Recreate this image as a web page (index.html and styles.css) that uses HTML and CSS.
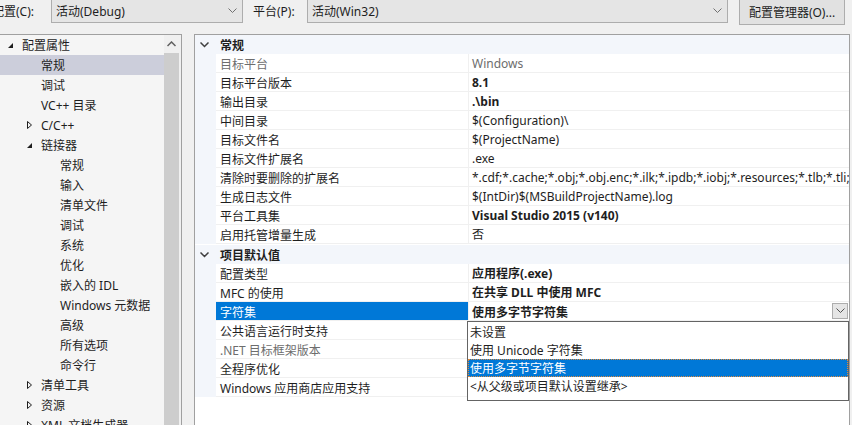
FILE: index.html
```html
<!DOCTYPE html>
<html lang="zh-CN">
<head>
    <meta charset="UTF-8">
    <title>属性页</title>
    <link rel="stylesheet" href="styles.css">
</head>
<body>
    <div class="toolbar">
        <span class="lbl lbl-config">配置(C):</span>
        <div class="combo combo-config">
            <span>活动(Debug)</span>
            <svg class="chev" width="9" height="6" viewBox="0 0 9 6"><path d="M0.5 0.5 L4.5 4.5 L8.5 0.5" fill="none" stroke="#707070" stroke-width="1"/></svg>
        </div>
        <span class="lbl lbl-platform">平台(P):</span>
        <div class="combo combo-platform">
            <span>活动(Win32)</span>
            <svg class="chev" width="9" height="6" viewBox="0 0 9 6"><path d="M0.5 0.5 L4.5 4.5 L8.5 0.5" fill="none" stroke="#707070" stroke-width="1"/></svg>
        </div>
        <button class="btn">配置管理器(O)...</button>
    </div>

    <div class="main">
        <div class="tree-panel">
            <ul class="tree">
                <li class="lv0 has-toggle"><svg class="tog" width="14" height="8" viewBox="0 0 14 8"><path d="M0 7 L5 7 L5 2 Z" fill="#1e1e1e"/></svg>配置属性</li>
                <li class="lv1 selected">常规</li>
                <li class="lv1">调试</li>
                <li class="lv1">VC++ 目录</li>
                <li class="lv1t has-toggle"><svg class="tog" width="14" height="8" viewBox="0 0 14 8"><path d="M0.5 0.5 L4.5 4 L0.5 7.5 Z" fill="none" stroke="#1e1e1e" stroke-width="1"/></svg>C/C++</li>
                <li class="lv1t has-toggle"><svg class="tog" width="14" height="8" viewBox="0 0 14 8"><path d="M0 7 L5 7 L5 2 Z" fill="#1e1e1e"/></svg>链接器</li>
                <li class="lv2">常规</li>
                <li class="lv2">输入</li>
                <li class="lv2">清单文件</li>
                <li class="lv2">调试</li>
                <li class="lv2">系统</li>
                <li class="lv2">优化</li>
                <li class="lv2">嵌入的 IDL</li>
                <li class="lv2">Windows 元数据</li>
                <li class="lv2">高级</li>
                <li class="lv2">所有选项</li>
                <li class="lv2">命令行</li>
                <li class="lv1t has-toggle"><svg class="tog" width="14" height="8" viewBox="0 0 14 8"><path d="M0.5 0.5 L4.5 4 L0.5 7.5 Z" fill="none" stroke="#1e1e1e" stroke-width="1"/></svg>清单工具</li>
                <li class="lv1t has-toggle"><svg class="tog" width="14" height="8" viewBox="0 0 14 8"><path d="M0.5 0.5 L4.5 4 L0.5 7.5 Z" fill="none" stroke="#1e1e1e" stroke-width="1"/></svg>资源</li>
                <li class="lv1t has-toggle"><svg class="tog" width="14" height="8" viewBox="0 0 14 8"><path d="M0.5 0.5 L4.5 4 L0.5 7.5 Z" fill="none" stroke="#1e1e1e" stroke-width="1"/></svg>XML 文档生成器</li>
            </ul>
            <div class="vscroll">
                <div class="arrow-up">
                    <svg width="9" height="6" viewBox="0 0 9 6"><path d="M0.5 5 L4.5 1 L8.5 5" fill="none" stroke="#606060" stroke-width="1.5"/></svg>
                </div>
                <div class="thumb"></div>
            </div>
        </div>

        <div class="grid-panel">
            <div class="cat">
                <div class="gutter"><svg width="9" height="6" viewBox="0 0 9 6"><path d="M0.5 0.5 L4.5 4.5 L8.5 0.5" fill="none" stroke="#404040" stroke-width="1.5"/></svg></div>
                <div class="cat-name">常规</div>
            </div>
            <div class="row disabled"><div class="gutter"></div><div class="name">目标平台</div><div class="value">Windows</div></div>
            <div class="row"><div class="gutter"></div><div class="name">目标平台版本</div><div class="value bold">8.1</div></div>
            <div class="row"><div class="gutter"></div><div class="name">输出目录</div><div class="value bold">.\bin</div></div>
            <div class="row"><div class="gutter"></div><div class="name">中间目录</div><div class="value">$(Configuration)\</div></div>
            <div class="row"><div class="gutter"></div><div class="name">目标文件名</div><div class="value">$(ProjectName)</div></div>
            <div class="row"><div class="gutter"></div><div class="name">目标文件扩展名</div><div class="value">.exe</div></div>
            <div class="row"><div class="gutter"></div><div class="name">清除时要删除的扩展名</div><div class="value">*.cdf;*.cache;*.obj;*.obj.enc;*.ilk;*.ipdb;*.iobj;*.resources;*.tlb;*.tli;*.tlh;*.tmp;*.rsp;*.pgc;*.pgd;*.meta;*.tlog</div></div>
            <div class="row"><div class="gutter"></div><div class="name">生成日志文件</div><div class="value">$(IntDir)$(MSBuildProjectName).log</div></div>
            <div class="row"><div class="gutter"></div><div class="name">平台工具集</div><div class="value bold">Visual Studio 2015 (v140)</div></div>
            <div class="row"><div class="gutter"></div><div class="name">启用托管增量生成</div><div class="value">否</div></div>

            <div class="cat cat-second">
                <div class="gutter"><svg width="9" height="6" viewBox="0 0 9 6"><path d="M0.5 0.5 L4.5 4.5 L8.5 0.5" fill="none" stroke="#404040" stroke-width="1.5"/></svg></div>
                <div class="cat-name">项目默认值</div>
            </div>
            <div class="row"><div class="gutter"></div><div class="name">配置类型</div><div class="value bold">应用程序(.exe)</div></div>
            <div class="row"><div class="gutter"></div><div class="name">MFC 的使用</div><div class="value bold">在共享 DLL 中使用 MFC</div></div>
            <div class="row selected">
                <div class="gutter"></div>
                <div class="name">字符集</div>
                <div class="value bold">
                    <span class="value-text">使用多字节字符集</span>
                    <span class="drop-btn"><svg width="9" height="6" viewBox="0 0 9 6"><path d="M0.5 0.5 L4.5 4.5 L8.5 0.5" fill="none" stroke="#505050" stroke-width="1"/></svg></span>
                </div>
            </div>
            <div class="row"><div class="gutter"></div><div class="name">公共语言运行时支持</div><div class="value"></div></div>
            <div class="row disabled"><div class="gutter"></div><div class="name">.NET 目标框架版本</div><div class="value"></div></div>
            <div class="row"><div class="gutter"></div><div class="name">全程序优化</div><div class="value"></div></div>
            <div class="row"><div class="gutter"></div><div class="name">Windows 应用商店应用支持</div><div class="value"></div></div>

            <ul class="dropdown">
                <li>未设置</li>
                <li>使用 Unicode 字符集</li>
                <li class="active">使用多字节字符集</li>
                <li>&lt;从父级或项目默认设置继承&gt;</li>
            </ul>
        </div>
    </div>
</body>
</html>
```

FILE: styles.css
```css
/* General */
body {
    margin: 0;
    width: 852px;
    height: 425px;
    overflow: hidden;
    background-color: #f0f0f0;
    font-family: "Noto Sans", "Noto Sans CJK SC", sans-serif;
    font-size: 12px;
    color: #1e1e1e;
}

/* Top toolbar */
.toolbar {
    display: flex;
    align-items: flex-start;
    height: 24px;
}

.lbl {
    height: 23px;
    line-height: 23px;
    white-space: nowrap;
}

.lbl-config {
    width: 59px;
    margin-left: -8px;
}

.lbl-platform {
    width: 54px;
    padding-left: 10px;
}

.combo {
    display: flex;
    align-items: center;
    justify-content: space-between;
    box-sizing: border-box;
    height: 24px;
    margin-top: -1px;
    padding: 0 5px 0 4px;
    background-color: #e5e5e5;
    border: 1px solid #adadad;
}

.combo-config {
    width: 192px;
}

.combo-platform {
    width: 421px;
}

.btn {
    box-sizing: border-box;
    width: 106px;
    height: 26px;
    margin: -1px 0 0 11px;
    padding: 0;
    background-color: #e1e1e1;
    border: 1px solid #adadad;
    font-family: inherit;
    font-size: 12px;
    color: #1e1e1e;
}

.main {
    display: flex;
    padding-top: 10px;
}

/* Tree */
.tree-panel {
    display: flex;
    box-sizing: border-box;
    width: 183px;
    height: 400px;
    margin-left: -1px;
    border: 1px solid #a0a0a0;
    background-color: #f5f5f5;
}

.tree {
    width: 164px;
    margin: 0;
    padding: 0;
    list-style: none;
}

.tree li {
    display: flex;
    align-items: center;
    height: 20px;
    white-space: nowrap;
}

.tree .tog {
    flex: none;
}

.tree .lv0 {
    padding-left: 8px;
}

.tree .lv1 {
    padding-left: 41px;
}

.tree .lv1t {
    padding-left: 27px;
}

.tree .lv2 {
    padding-left: 60px;
}

.tree .selected {
    background-color: #cccedb;
}

.vscroll {
    width: 17px;
    background-color: #f0f0f0;
}

.arrow-up {
    display: flex;
    align-items: center;
    justify-content: center;
    width: 15px;
    height: 18px;
}

.thumb {
    width: 15px;
    height: 380px;
    background-color: #cdcdcd;
}

/* Property grid */
.grid-panel {
    position: relative;
    box-sizing: border-box;
    width: 656px;
    height: 400px;
    margin-left: 12px;
    border: 1px solid #a0a0a0;
    background-color: #fff;
}

.cat,
.row {
    display: flex;
    height: 19px;
    line-height: 18px;
}

.cat {
    background-color: #f3f6fb;
    font-weight: bold;
}

.cat-second {
    margin-top: 1px;
}

.gutter {
    flex: none;
    width: 21px;
    background-color: #f3f6fb;
}

.cat .gutter {
    display: flex;
    align-items: center;
    justify-content: center;
    padding-right: 3px;
    box-sizing: border-box;
}

.cat-name {
    padding: 2px 0 0 4px;
}

.name {
    flex: none;
    box-sizing: border-box;
    width: 252px;
    padding: 2px 0 0 4px;
    border-bottom: 1px solid #f0f0f0;
    white-space: nowrap;
}

.value {
    display: flex;
    align-items: flex-start;
    flex: 1;
    min-width: 0;
    padding: 1px 0 0 3px;
    border-left: 1px solid #f0f0f0;
    border-bottom: 1px solid #f0f0f0;
    white-space: nowrap;
    overflow: hidden;
}

.value-text,
.value:not(:has(.value-text)) {
    padding-top: 1px;
}

.value.bold {
    font-weight: bold;
}

.disabled .name,
.disabled .value {
    color: #6d6d6d;
}

.row.selected .name {
    background-color: #0078d7;
    color: #fff;
}

.value-text {
    flex: 1;
}

.drop-btn {
    display: flex;
    align-items: center;
    justify-content: center;
    box-sizing: border-box;
    width: 16px;
    height: 16px;
    margin-right: 1px;
    background-color: #e5e5e5;
    border: 1px solid #adadad;
}

/* Open drop-down list */
.dropdown {
    position: absolute;
    left: 272px;
    top: 286px;
    box-sizing: border-box;
    width: 382px;
    height: 80px;
    margin: 0;
    padding: 1px 0 0;
    list-style: none;
    background-color: #fff;
    border: 1px solid #646464;
}

.dropdown li {
    box-sizing: border-box;
    height: 18px;
    line-height: 18px;
    padding: 1px 0 0 2px;
    white-space: nowrap;
}

.dropdown .active {
    background-color: #0078d7;
    color: #fff;
    outline: 1px dotted #e08a3c;
    outline-offset: -1px;
}
```
